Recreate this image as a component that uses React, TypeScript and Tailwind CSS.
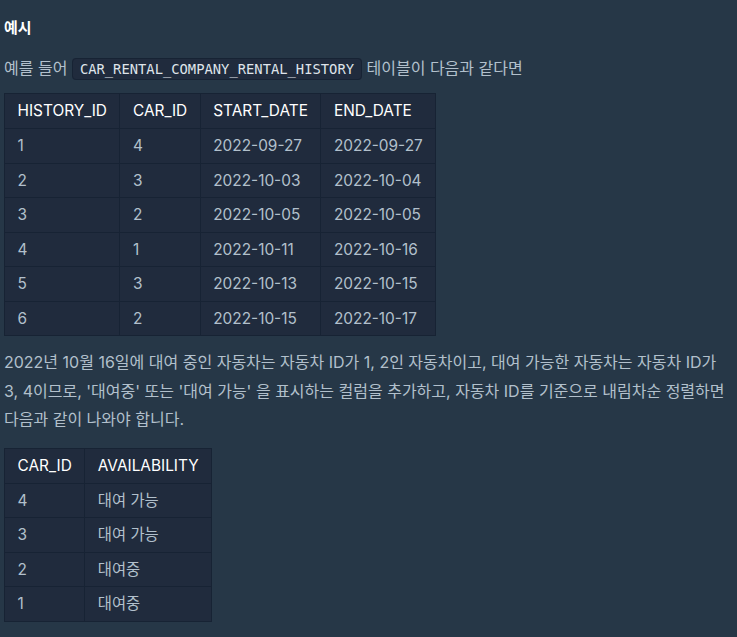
import React from 'react';

const history = [
  ['1', '4', '2022-09-27', '2022-09-27'],
  ['2', '3', '2022-10-03', '2022-10-04'],
  ['3', '2', '2022-10-05', '2022-10-05'],
  ['4', '1', '2022-10-11', '2022-10-16'],
  ['5', '3', '2022-10-13', '2022-10-15'],
  ['6', '2', '2022-10-15', '2022-10-17'],
];

const result = [
  ['4', '대여 가능'],
  ['3', '대여 가능'],
  ['2', '대여중'],
  ['1', '대여중'],
];

const Table = ({ head, rows }: { head: string[]; rows: string[][] }) => (
  <table className="border-collapse bg-[#202b3d] border border-[#172334] text-[15.4px]">
    <thead>
      <tr>
        {head.map((h) => (
          <th key={h} className="border border-[#172334] px-[12.5px] h-[35px] text-left font-normal text-white">
            {h}
          </th>
        ))}
      </tr>
    </thead>
    <tbody>
      {rows.map((r, i) => (
        <tr key={i}>
          {r.map((c, j) => (
            <td key={j} className="border border-[#172334] px-[12.5px] h-[34.5px] text-[#b2c0cc]">
              {c}
            </td>
          ))}
        </tr>
      ))}
    </tbody>
  </table>
);

export default function App() {
  return (
    <div
      className="min-h-[637px] bg-[#263747] px-[4px] pt-[17px] text-[16px] text-[#b2c0cc]"
      style={{ fontFamily: 'Inter, "Noto Sans CJK KR", sans-serif' }}
    >
      <h5 className="text-[15px] font-bold text-white leading-[22px]">예시</h5>
      <p className="mt-[18px] leading-[22px]">
        예를 들어{' '}
        <code className="rounded-[4px] border border-[#172334] bg-[#202b3d] px-[7px] py-[2px] text-[13.8px] text-[#dfe4ea] font-['DejaVu_Sans_Mono',monospace]">
          CAR_RENTAL_COMPANY_RENTAL_HISTORY
        </code>{' '}
        테이블이 다음과 같다면
      </p>
      <div className="mt-[13px]">
        <Table head={['HISTORY_ID', 'CAR_ID', 'START_DATE', 'END_DATE']} rows={history} />
      </div>
      <p className="mt-[12px] leading-[28.5px]">
        2022년 10월 16일에 대여 중인 자동차는 자동차 ID가 1, 2인 자동차이고, 대여 가능한 자동차는 자동차 ID가 3, 4이므로, '대여중' 또는 '대여 가능' 을 표시하는 컬럼을 추가하고, 자동차 ID를 기준으로 내림차순 정렬하면 다음과 같이 나와야 합니다.
      </p>
      <div className="mt-[14px]">
        <Table head={['CAR_ID', 'AVAILABILITY']} rows={result} />
      </div>
    </div>
  );
}
